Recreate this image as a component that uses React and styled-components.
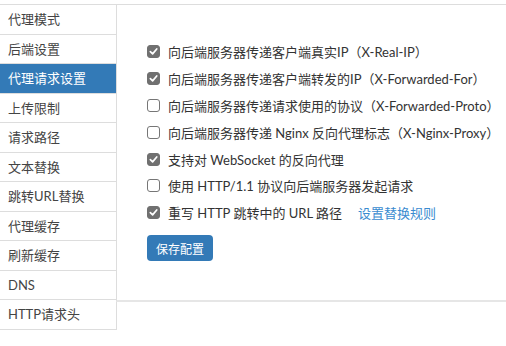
import React from "react";
import styled, { createGlobalStyle } from "styled-components";

const Global = createGlobalStyle`
  html, body { margin: 0; padding: 0; background: #fff; }
  body { font-family: "Lato", "Noto Sans CJK SC", sans-serif; color: #333; }
`;

const Page = styled.div`
  display: flex;
  align-items: flex-start;
  padding-top: 4px;
  width: 506px;
`;

const Sidebar = styled.ul`
  list-style: none;
  margin: 0;
  padding: 0;
  width: 116px;
  flex: none;
  border-top: 1px solid #ddd;
  border-right: 1px solid #ddd;
`;

const NavItem = styled.li`
  height: 28.5px;
  line-height: 28.5px;
  padding-left: 8px;
  font-size: 13px;
  border-bottom: 1px solid #ddd;
  color: ${(p) => (p.$active ? "#fff" : "#444")};
  background: ${(p) => (p.$active ? "#337ab7" : "#fff")};
  white-space: nowrap;
`;

const Main = styled.div`
  flex: 1;
  box-sizing: border-box;
  height: 298px;
  border-top: 1px solid #ddd;
  border-bottom: 2px solid #e6e6e6;
  margin-left: -1px;
  border-left: 1px solid #ddd;
  padding: 33px 0 0 30px;
`;

const Row = styled.label`
  display: flex;
  align-items: center;
  height: 26.9px;
  font-size: 13px;
  color: #333;
  white-space: nowrap;
`;

const Box = styled.span`
  width: 13px;
  height: 13px;
  box-sizing: border-box;
  border-radius: 3px;
  flex: none;
  margin-right: 8px;
  display: flex;
  align-items: center;
  justify-content: center;
  background: ${(p) => (p.$checked ? "#707070" : "#fff")};
  border: 1px solid ${(p) => (p.$checked ? "#707070" : "#767676")};
`;

const Link = styled.a`
  color: #3a8bd0;
  margin-left: 16px;
  text-decoration: none;
`;

const Button = styled.button`
  margin-top: 9px;
  width: 66px;
  height: 26px;
  border: none;
  border-radius: 4px;
  background: #337ab7;
  color: #fff;
  font-family: inherit;
  font-size: 12px;
  padding: 0;
  cursor: pointer;
`;

const Check = () => (
  <svg width="9" height="9" viewBox="0 0 10 10">
    <path d="M1.5 5.2 L4 7.6 L8.6 2.2" fill="none" stroke="#fff" strokeWidth="1.9" strokeLinecap="round" strokeLinejoin="round" />
  </svg>
);

const navItems = [
  "代理模式",
  "后端设置",
  "代理请求设置",
  "上传限制",
  "请求路径",
  "文本替换",
  "跳转URL替换",
  "代理缓存",
  "刷新缓存",
  "DNS",
  "HTTP请求头",
];

const options = [
  { text: "向后端服务器传递客户端真实IP（X-Real-IP）", checked: true },
  { text: "向后端服务器传递客户端转发的IP（X-Forwarded-For）", checked: true },
  { text: "向后端服务器传递请求使用的协议（X-Forwarded-Proto）", checked: false },
  { text: "向后端服务器传递 Nginx 反向代理标志（X-Nginx-Proxy）", checked: false },
  { text: "支持对 WebSocket 的反向代理", checked: true },
  { text: "使用 HTTP/1.1 协议向后端服务器发起请求", checked: false },
  { text: "重写 HTTP 跳转中的 URL 路径", checked: true, link: "设置替换规则" },
];

export default function App() {
  return (
    <>
      <Global />
      <Page>
        <Sidebar>
          {navItems.map((n) => (
            <NavItem key={n} $active={n === "代理请求设置"}>
              {n}
            </NavItem>
          ))}
        </Sidebar>
        <Main>
          {options.map((o) => (
            <Row key={o.text}>
              <Box $checked={o.checked}>{o.checked && <Check />}</Box>
              {o.text}
              {o.link && <Link href="#">{o.link}</Link>}
            </Row>
          ))}
          <Button>保存配置</Button>
        </Main>
      </Page>
    </>
  );
}
